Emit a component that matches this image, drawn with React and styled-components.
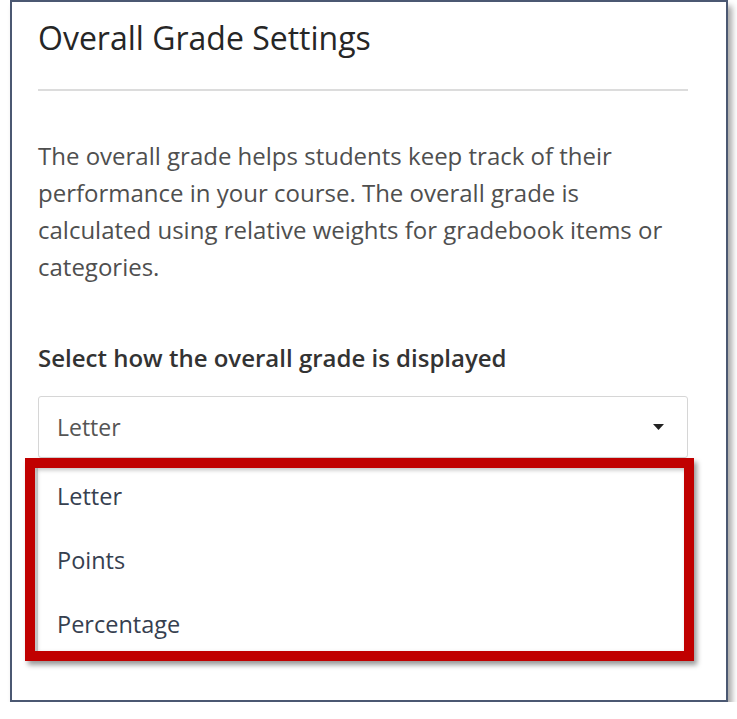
import React from "react";
import styled, { createGlobalStyle } from "styled-components";

const GlobalStyle = createGlobalStyle`
  body {
    margin: 0;
    background: #ffffff;
    font-family: "Open Sans", "Noto Sans", sans-serif;
  }
`;

const options = ["Letter", "Points", "Percentage"];

export default function App() {
  return (
    <>
      <GlobalStyle />
      <Panel>
        <Title>Overall Grade Settings</Title>
        <Divider />
        <Intro>
          The overall grade helps students keep track of their performance in
          your course. The overall grade is calculated using relative weights
          for gradebook items or categories.
        </Intro>
        <Label>Select how the overall grade is displayed</Label>
        <SelectBox>
          <span>Letter</span>
          <Caret viewBox="0 0 11 6">
            <path d="M0 0 L11 0 L5.5 6 Z" fill="#222" />
          </Caret>
        </SelectBox>
        <Menu>
          {options.map((o) => (
            <Option key={o}>{o}</Option>
          ))}
          <Highlight />
        </Menu>
      </Panel>
    </>
  );
}

const Panel = styled.div`
  margin-left: 10px;
  width: 650px;
  height: 660px;
  padding: 18px 38px 20px 26px;
  border: 2px solid #4b5872;
  box-shadow: 4px 6px 6px rgba(0, 0, 0, 0.35);
  background: #ffffff;
  display: flex;
  flex-direction: column;
`;

const Title = styled.h1`
  margin: 0;
  font-size: 32px;
  line-height: 36px;
  font-weight: 400;
  color: #262626;
  white-space: nowrap;
`;

const Divider = styled.hr`
  margin: 33px 0 0;
  border: 0;
  height: 2px;
  background: #dcdcdc;
`;

const Intro = styled.p`
  margin: 46px 0 0;
  font-size: 24px;
  line-height: 37px;
  color: #4f4f4f;
`;

const Label = styled.div`
  margin-top: 58px;
  font-size: 24px;
  line-height: 30px;
  font-weight: 600;
  color: #333333;
  white-space: nowrap;
`;

const SelectBox = styled.div`
  margin-top: 23px;
  height: 60px;
  border: 1px solid #d6d6d6;
  border-radius: 3px;
  display: flex;
  align-items: center;
  justify-content: space-between;
  padding: 0 23px 0 18px;
  font-size: 23px;
  color: #555555;
`;

const Caret = styled.svg`
  width: 11px;
  height: 6px;
`;

const Menu = styled.ul`
  position: relative;
  list-style: none;
  margin: 0;
  padding: 6px 0 0;
  background: #ffffff;
  box-shadow: -1px 2px 4px rgba(0, 0, 0, 0.25);
`;

const Option = styled.li`
  height: 64px;
  display: flex;
  align-items: center;
  padding-left: 19px;
  font-size: 23.5px;
  color: #36404f;
`;

const Highlight = styled.div`
  position: absolute;
  top: 0;
  left: -13px;
  right: -6px;
  bottom: -5px;
  border: 10px solid #c00000;
  box-shadow: 3px 4px 5px rgba(0, 0, 0, 0.4), inset 2px 2px 4px rgba(0, 0, 0, 0.25);
  pointer-events: none;
`;
